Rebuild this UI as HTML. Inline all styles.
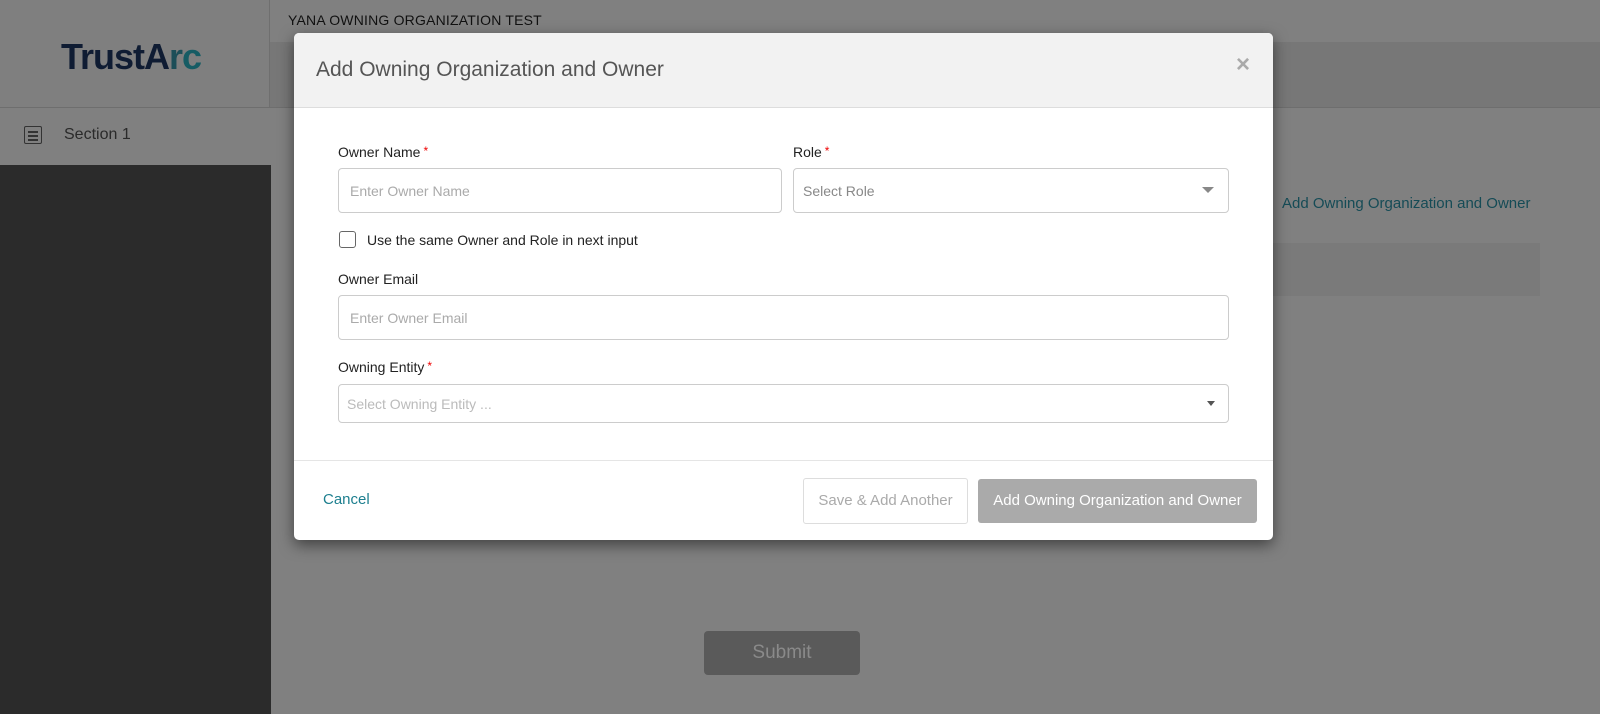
<!DOCTYPE html>
<html><head><style>
*{box-sizing:border-box;margin:0;padding:0}
body{width:1600px;height:714px;overflow:hidden;background:#808080;font-family:"Liberation Sans",Arial,sans-serif;position:relative}
.abs{position:absolute}
.lbl{position:absolute;font-size:14px;color:#222}
.req{color:#e00;font-size:12px;margin-left:3px;vertical-align:top}
.inp{position:absolute;background:#fff;border:1px solid #ccc;border-radius:4px;font-size:14px;color:#aaa;padding-left:11px;display:flex;align-items:center}
</style></head><body>
<div class="abs" style="left:0;top:0;width:270px;height:107px;background:#7f7f7f;border-right:1px solid #6f6f6f"></div>
<div class="abs" style="left:61px;top:36px;font-size:36px;font-weight:bold;color:#0f1c33;letter-spacing:-1px">TrustA<span style="color:#1c4e58">r</span><span style="color:#165c64">c</span></div>
<div class="abs" style="left:270px;top:42px;width:1330px;height:65px;background:#777"></div>
<div class="abs" style="left:0;top:107px;width:1600px;height:1px;background:#6e6e6e"></div>
<div class="abs" style="left:288px;top:12px;font-size:14px;color:#111;letter-spacing:0.2px">YANA OWNING ORGANIZATION TEST</div>
<div class="abs" style="left:24px;top:126px;width:18px;height:18px;border:1.5px solid #333;border-radius:2px"></div>
<div class="abs" style="left:28px;top:131px;width:10px;height:1.5px;background:#333;box-shadow:0 4px 0 #333,0 8px 0 #333"></div>
<div class="abs" style="left:64px;top:126px;font-size:16px;color:#2a2a2a">Section 1</div>
<div class="abs" style="left:0;top:165px;width:271px;height:549px;background:#2b2b2b"></div>
<div class="abs" style="left:1282px;top:195px;font-size:15px;color:#154b56">Add Owning Organization and Owner</div>
<div class="abs" style="left:1272px;top:243px;width:268px;height:53px;background:#7a7a7a"></div>
<div class="abs" style="left:704px;top:631px;width:156px;height:44px;background:#5a5a5a;border-radius:4px;color:#8a8a8a;font-size:19px;text-align:center;line-height:44px">Submit</div>

<div class="abs" style="left:294px;top:33px;width:979px;height:507px;background:#fff;border-radius:5px;box-shadow:0 5px 15px rgba(0,0,0,.5);overflow:hidden">
 <div class="abs" style="left:0;top:0;width:979px;height:75px;background:#f2f2f2;border-bottom:1px solid #ddd"></div>
 <div class="abs" style="left:22px;top:25px;font-size:21px;color:#555">Add Owning Organization and Owner</div>
 <div class="abs" style="left:942px;top:18px;font-size:24px;font-weight:bold;color:#aaa">×</div>
 <div class="lbl" style="left:44px;top:111px">Owner Name<span class="req">*</span></div>
 <div class="lbl" style="left:499px;top:111px">Role<span class="req">*</span></div>
 <div class="inp" style="left:44px;top:135px;width:444px;height:45px">Enter Owner Name</div>
 <div class="inp" style="left:499px;top:135px;width:436px;height:45px;color:#888;padding-left:9px">Select Role</div>
 <div class="abs" style="left:908px;top:154px;border-left:6px solid transparent;border-right:6px solid transparent;border-top:6px solid #888"></div>
 <div class="abs" style="left:45px;top:198px;width:17px;height:17px;border:1.5px solid #666;border-radius:3px"></div>
 <div class="lbl" style="left:73px;top:199px">Use the same Owner and Role in next input</div>
 <div class="lbl" style="left:44px;top:238px">Owner Email</div>
 <div class="inp" style="left:44px;top:262px;width:891px;height:45px">Enter Owner Email</div>
 <div class="lbl" style="left:44px;top:326px">Owning Entity<span class="req">*</span></div>
 <div class="inp" style="left:44px;top:351px;width:891px;height:39px;padding-left:8px;color:#bbb">Select Owning Entity ...</div>
 <div class="abs" style="left:913px;top:368px;border-left:4.5px solid transparent;border-right:4.5px solid transparent;border-top:5px solid #555"></div>
 <div class="abs" style="left:0;top:427px;width:979px;height:1px;background:#e5e5e5"></div>
 <div class="abs" style="left:29px;top:458px;font-size:15px;color:#1d7f8f">Cancel</div>
 <div class="abs" style="left:509px;top:445px;width:165px;height:46px;border:1px solid #ddd;border-radius:3px;font-size:15px;color:#aaa;text-align:center;line-height:44px">Save &amp; Add Another</div>
 <div class="abs" style="left:684px;top:446px;width:279px;height:44px;background:#aaa;border-radius:3px;font-size:15px;color:#fff;text-align:center;line-height:44px">Add Owning Organization and Owner</div>
</div>
</body></html>
